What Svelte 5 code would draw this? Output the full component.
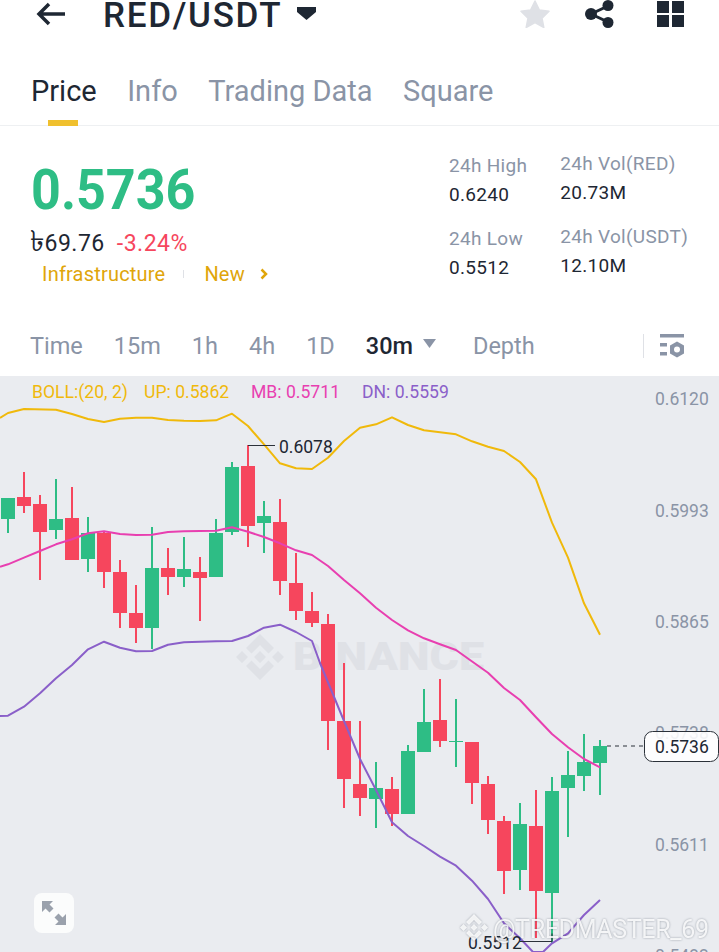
<script lang="ts">
  // candle values are pixel y positions read off the chart: body top, body bottom, wick top, wick bottom, up
  type Candle = { top: number; bottom: number; high: number; low: number; up: boolean };

  const raw: [number, number, number, number, number][] = [
    [498, 519, 498, 533, 1], [497, 506, 472, 513, 0], [504, 532, 495, 580, 0], [519, 530, 479, 539, 1],
    [518, 560, 487, 560, 0], [533, 559, 517, 572, 1], [533, 572, 531, 588, 0], [572, 613, 560, 628, 0],
    [613, 628, 585, 643, 0], [568, 628, 527, 649, 1], [568, 577, 548, 595, 0], [569, 577, 537, 587, 1],
    [572, 578, 557, 621, 0], [533, 577, 519, 577, 1], [467, 532, 462, 535, 1], [466, 526, 445, 547, 0],
    [516, 523, 501, 553, 1], [522, 581, 499, 595, 0], [583, 611, 553, 620, 0], [611, 623, 592, 627, 0],
    [624, 721, 614, 750, 0], [721, 779, 663, 808, 0], [784, 798, 721, 816, 0], [788, 799, 762, 828, 1],
    [789, 814, 777, 826, 0], [751, 814, 745, 814, 1], [722, 752, 689, 752, 1], [720, 741, 679, 747, 0],
    [741, 742, 699, 767, 1], [742, 783, 742, 804, 0], [784, 820, 776, 834, 0], [821, 871, 816, 894, 0],
    [824, 870, 803, 890, 1], [826, 891, 790, 938, 0], [791, 893, 777, 943, 1], [775, 788, 751, 837, 1],
    [762, 776, 734, 791, 1], [746, 763, 740, 795, 1]
  ];

  const candles: (Candle & { x: number })[] = raw.map((c, i) => ({
    x: 8 + 16 * i, top: c[0], bottom: c[1], high: c[2], low: c[3], up: c[4] === 1
  }));

  const upper =
    '0,418 8,413 24,409 56,409.7 72,414 88,419 104,422 120,418.7 136,417.7 152,417.7 168,420 184,420.7 200,421 216,420.3 232,413.7 248,426 264,444.3 280,463.3 296,468.3 312,469 328,457.7 344,441 360,427.7 376,424.3 392,417.3 408,425 424,430.3 440,432.3 456,434.3 472,441.3 488,446.7 504,451 520,462 536,479.3 552,522.7 568,557.7 584,603.3 600,634.7';
  const middle =
    '0,566.7 8,564.3 24,557.7 40,551 56,544.3 72,539.3 88,533.3 104,531.3 120,534 136,535 152,534.7 168,532 184,531.3 200,531 216,530.7 232,527.3 248,531.7 264,537 280,543.3 296,550.3 312,555 328,566 344,580 360,593.3 376,607.7 392,620 408,630.3 424,638.3 440,644.3 456,650 470,660 488,672.7 504,688 520,700 536,717.3 552,734 568,747.3 584,759 600,767.3';
  const lower =
    '0,716 8,715.7 24,706.7 40,693.3 56,678.3 72,665 88,649.3 104,641.7 120,647.7 136,651.3 152,651 168,644.7 184,642.3 200,641.7 216,641.3 232,641 248,636 264,627.7 280,624.7 296,632 312,641 320,663 344,721 360,759 376,790 392,822.3 408,836 424,846 440,856.7 456,865.7 472,880.7 488,899 504,923.3 520,938.3 533,952 543,952 552,943.3 568,933.3 584,915 600,900';

  const tabs = ['Info', 'Trading Data', 'Square'];
  const intervals = ['15m', '1h', '4h', '1D'];
  const axis = [
    { y: 399, label: '0.6120' },
    { y: 511, label: '0.5993' },
    { y: 622, label: '0.5865' },
    { y: 733, label: '0.5738' },
    { y: 845, label: '0.5611' },
    { y: 956, label: '0.5483' }
  ];
</script>

<main class="page">
  <header class="topbar">
    <svg class="back" viewBox="0 0 30 24" aria-hidden="true">
      <path d="M29 12H3M13 2 3 12l10 10" />
    </svg>
    <h1>RED/USDT</h1>
    <svg class="caret" viewBox="0 0 19 13" aria-hidden="true"><path d="M0 0h19v5l-9.5 8L0 5z" /></svg>
    <div class="actions">
      <svg class="star" viewBox="0 0 30 28" aria-hidden="true">
        <path d="M15 1l4.400 9 9.600 1.300-7 6.800 1.800 9.400-8.800-4.900-8.800 4.900 1.800-9.400-7-6.800 9.600-1.300z" />
      </svg>
      <svg class="share" viewBox="0 0 29 28" aria-hidden="true">
        <path class="share-link" d="M23 6 6 14l17 8" />
        <circle cx="23" cy="5.500" r="5.500" /><circle cx="6" cy="14" r="6" /><circle cx="23" cy="22.500" r="5.500" />
      </svg>
      <svg class="grid" viewBox="0 0 27 26" aria-hidden="true">
        <rect width="12" height="12" /><rect x="15" width="12" height="12" />
        <rect y="14" width="12" height="12" /><rect x="15" y="14" width="12" height="12" />
      </svg>
    </div>
  </header>

  <nav class="tabs">
    <span class="tab active">Price</span>
    {#each tabs as tab}
      <span class="tab">{tab}</span>
    {/each}
  </nav>

  <section class="stats">
    <div class="quote">
      <div class="last">0.5736</div>
      <div class="fiat"><span><span class="taka">৳</span>69.76</span><span class="change">-3.24%</span></div>
      <div class="tags">
        <span>Infrastructure</span>
        <i class="sep"></i>
        <span>New</span>
        <svg class="chev" viewBox="0 0 8 12" aria-hidden="true"><path d="M1.500 1.500 6 6l-4.500 4.500" /></svg>
      </div>
    </div>
    <div class="cols">
      <dl class="col col-a">
        <dt>24h High</dt><dd>0.6240</dd>
        <dt>24h Low</dt><dd>0.5512</dd>
      </dl>
      <dl class="col col-b">
        <dt>24h Vol(RED)</dt><dd>20.73M</dd>
        <dt>24h Vol(USDT)</dt><dd>12.10M</dd>
      </dl>
    </div>
  </section>

  <div class="intervals">
    <span class="iv time">Time</span>
    {#each intervals as iv}
      <span class="iv">{iv}</span>
    {/each}
    <span class="iv current">30m</span>
    <svg class="iv-caret" viewBox="0 0 13 9" aria-hidden="true"><path d="M0 0h13L6.500 9z" /></svg>
    <span class="iv depth">Depth</span>
    <i class="iv-line"></i>
    <svg class="iv-settings" viewBox="0 0 24 24" aria-hidden="true">
      <rect width="24" height="3.500" />
      <rect x="0" y="9" width="7" height="3.500" /><rect x="0" y="18" width="7" height="3.500" />
      <path fill-rule="evenodd" d="M17 7.500l7 4v8l-7 4-7-4v-8zM17 12.500a3 3 0 1 0 0 6 3 3 0 0 0 0-6z" />
    </svg>
  </div>

  <div class="chart">
    <svg viewBox="0 376 719 576" width="719" height="576">
      <g class="mark">
        <path d="M260 634l-14 14 5.500 5.500 8.500-8.500 8.500 8.500 5.500-5.500z" />
        <path d="M260 680l-14-14 5.500-5.500 8.500 8.500 8.500-8.500 5.500 5.500z" />
        <path d="M236 657l6-6 6 6-6 6zM272 657l6-6 6 6-6 6zM254 657l6-6 6 6-6 6z" />
        <text x="293" y="669.500" textLength="191" lengthAdjust="spacingAndGlyphs">BINANCE</text>
      </g>

      {#each candles as c}
        <g class={c.up ? 'up' : 'down'}>
          <rect x={c.x - 1} y={c.high} width="2" height={c.low - c.high} />
          <rect x={c.x - 7} y={c.top} width="14" height={c.bottom - c.top} />
        </g>
      {/each}

      <polyline class="line boll-up" points={upper} />
      <polyline class="line boll-mb" points={middle} />
      <polyline class="line boll-dn" points={lower} />

      <g class="legend">
        <text class="c-up" x="32" y="398">BOLL:(20, 2)</text>
        <text class="c-up" x="144" y="398">UP: 0.5862</text>
        <text class="c-mb" x="251" y="398">MB: 0.5711</text>
        <text class="c-dn" x="362" y="398">DN: 0.5559</text>
      </g>

      {#each axis as a}
        <text class="axis" x="655" y={a.y + 6}>{a.label}</text>
      {/each}

      <path class="leader" d="M248 445.500h27" />
      <text class="extreme" x="279" y="453">0.6078</text>

      <path class="dash" d="M607 746h38" />
      <rect class="pill" x="644.500" y="731.500" width="74" height="30" rx="8" />
      <text class="pill-text" x="655" y="753">0.5736</text>

      <path class="leader" d="M520 941.500h32v-8" />
      <text class="extreme" x="468" y="948.500">0.5512</text>

      <g class="stamp">
        <path d="M474 914l-8 8 3 3 5-5 5 5 3-3zM474 941l-8-8 3-3 5 5 5-5 3 3zM460 927.500l3.500-3.500 3.500 3.500-3.500 3.500zM481 927.500l3.500-3.500 3.500 3.500-3.500 3.500zM470.500 927.500l3.500-3.500 3.500 3.500-3.500 3.500z" />
        <text x="493" y="938" textLength="216">@TREDMASTER_69</text>
      </g>
    </svg>

    <button class="expand" aria-label="Expand chart">
      <svg viewBox="0 0 24 24" aria-hidden="true">
        <path d="M0 0h11L7.500 3.500l4 4-4 4-4-4L0 11zM24 24H13l3.500-3.500-4-4 4-4 4 4L24 13z" />
      </svg>
    </button>
  </div>
</main>

<style>
  :global(body) {
    margin: 0;
    background: #fff;
    overflow: hidden;
  }

  .page {
    width: 719px;
    height: 952px;
    overflow: hidden;
    font-family: Roboto, "Noto Sans", "DejaVu Sans", sans-serif;
    color: #1e2733;
  }

  /* top bar */
  .topbar {
    display: flex;
    align-items: center;
    height: 28px;
    padding: 0 35px 0 36px;
  }

  .back {
    width: 30px;
    height: 24px;
    fill: none;
    stroke: #1e2733;
    stroke-width: 3.5;
  }

  h1 {
    margin: 3px 0 0 37px;
    font-size: 35px;
    font-weight: 500;
    line-height: 28px;
    letter-spacing: 1.7px;
  }

  .caret {
    width: 19px;
    height: 13px;
    margin-left: 15px;
    fill: #1e2733;
    align-self: flex-start;
    margin-top: 7px;
  }

  .actions {
    display: flex;
    align-items: center;
    margin-left: auto;
    gap: 35px;
  }

  .star { width: 30px; height: 28px; fill: #dfe1e6; stroke: #dfe1e6; stroke-width: 1.5; stroke-linejoin: round; }
  .share { width: 29px; height: 28px; fill: #1e2733; }
  .share-link { fill: none; stroke: #1e2733; stroke-width: 3; }
  .grid { width: 27px; height: 26px; fill: #1e2733; margin-left: 8px; }

  /* tabs */
  .tabs {
    display: flex;
    gap: 30.500px;
    height: 98px;
    padding: 49px 0 0 31px;
    box-sizing: border-box;
    border-bottom: 1px solid #eef0f2;
    font-size: 29px;
    line-height: 28px;
    color: #8a94a6;
  }

  .tab {
    position: relative;
  }

  .tab.active {
    color: #1e2733;
  }

  .tab.active::after {
    content: "";
    position: absolute;
    left: 17px;
    top: 43px;
    width: 30px;
    height: 6px;
    background: #f0c02e;
  }

  /* stats */
  .stats {
    display: flex;
    justify-content: space-between;
    height: 192px;
    padding: 0 0 0 31px;
  }

  .last {
    margin-top: 35px;
    font-size: 56px;
    font-weight: 700;
    line-height: 58px;
    color: #2ebd85;
    transform: scaleX(0.93);
    transform-origin: left;
  }

  .fiat {
    display: flex;
    gap: 12px;
    margin-top: 11px;
    font-size: 23px;
    line-height: 28px;
    letter-spacing: 0.5px;
  }

  .taka {
    font-size: 29px;
    line-height: 20px;
    margin-left: -1px;
  }

  .change {
    color: #f6465d;
  }

  .tags {
    display: flex;
    align-items: center;
    margin: 4px 0 0 11px;
    font-size: 20px;
    line-height: 24px;
    letter-spacing: 0.2px;
    color: #e0a50a;
  }

  .sep {
    width: 1px;
    height: 8px;
    margin: 0 20px 0 18px;
    background: #dfe1e6;
  }

  .chev {
    width: 8px;
    height: 12px;
    margin-left: 15px;
    fill: none;
    stroke: #e0a50a;
    stroke-width: 2.5;
  }

  .cols {
    display: flex;
    gap: 33px;
    width: 270px;
  }

  .col {
    margin: 0;
  }

  .col-a { padding-top: 28px; }
  .col-b { padding-top: 26px; }

  dt {
    font-size: 19px;
    line-height: 24px;
    letter-spacing: 0.3px;
    color: #8a94a6;
    white-space: nowrap;
  }

  dd {
    margin: 5px 0 20px;
    font-size: 19px;
    line-height: 24px;
    letter-spacing: 0.3px;
    white-space: nowrap;
  }

  /* interval row */
  .intervals {
    display: flex;
    align-items: center;
    height: 58px;
    padding: 0 35px 2px 30px;
    box-sizing: border-box;
    font-size: 23.500px;
    color: #8a94a6;
  }

  .iv { margin-right: 31px; }
  .iv.current { margin-right: 10px; color: #1e2733; font-weight: 500; }
  .iv-caret { width: 13px; height: 9px; fill: #8a94a6; margin: -5px 37px 0 0; }
  .iv.depth { margin-right: 0; }
  .iv-line { width: 1px; height: 24px; background: #dfe1e6; margin-left: auto; margin-right: 16px; }
  .iv-settings { width: 24px; height: 24px; fill: #8a94a6; }

  /* chart */
  .chart {
    position: relative;
    height: 576px;
    background: #eaecf0;
  }

  .chart > svg {
    display: block;
    font-family: Roboto, "Noto Sans", sans-serif;
  }

  .mark { fill: #dfe1e6; }
  .mark text { font-size: 39px; font-weight: 900; }

  .up { fill: #2ebd85; }
  .down { fill: #f6465d; }

  .line { fill: none; stroke-width: 2; stroke-linejoin: round; }
  .boll-up { stroke: #f0b90b; }
  .boll-mb { stroke: #e83fb0; }
  .boll-dn { stroke: #8a5fc9; }

  .legend { font-size: 17.600px; }
  .c-up { fill: #f0b90b; }
  .c-mb { fill: #e83fb0; }
  .c-dn { fill: #8a5fc9; }

  .axis { font-size: 17.500px; fill: #8a94a6; }
  .extreme { font-size: 17.500px; fill: #1e2733; }
  .leader { fill: none; stroke: #2b3139; stroke-width: 1; }
  .dash { fill: none; stroke: #2b3139; stroke-width: 1; stroke-dasharray: 4 4; }
  .pill { fill: #fff; fill-opacity: 0.88; stroke: #2b3139; stroke-width: 1; }
  .pill-text { font-size: 17.500px; fill: #1e2733; }

  .stamp {
    fill: #fff;
    fill-opacity: 0.85;
    filter: drop-shadow(0 0 1px rgba(70, 80, 95, 0.55));
  }
  .stamp text { font-size: 25px; }

  .expand {
    position: absolute;
    left: 34px;
    bottom: 19px;
    width: 40px;
    height: 40px;
    padding: 8px;
    border: 0;
    border-radius: 8px;
    background: #fbfcfc;
  }

  .expand svg {
    display: block;
    width: 24px;
    height: 24px;
    fill: #9aa1ac;
  }
</style>
